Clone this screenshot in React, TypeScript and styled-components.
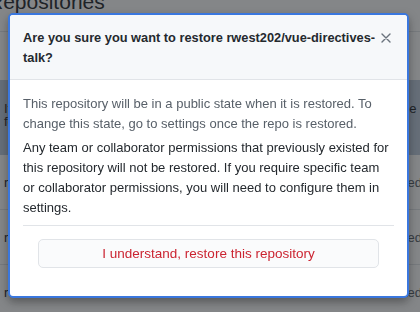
import React from 'react';
import styled, { createGlobalStyle } from 'styled-components';

const GlobalStyle = createGlobalStyle`
  html, body {
    margin: 0;
    padding: 0;
    width: 420px;
    height: 312px;
    overflow: hidden;
    background: #fff;
  }
  body {
    font-family: "Liberation Sans", Arial, Helvetica, sans-serif;
    color: #24292e;
    -webkit-font-smoothing: antialiased;
  }
`;

/* --- page behind the dialog --- */

const Page = styled.div`
  width: 560px;
  margin-left: -12px;
`;

const PageTitle = styled.h2`
  margin: -11px 0 0;
  padding: 0 0 16px;
  font-size: 21px;
  line-height: 26px;
  font-weight: 400;
  color: #24292e;
  border-bottom: 1px solid #e1e4e8;
`;

const Notice = styled.div`
  margin-top: 48px;
  height: 75px;
  box-sizing: border-box;
  padding: 22px 16px 0 16px;
  background: #bdcbdd;
  font-size: 13px;
  line-height: 13px;
  color: #24292e;
`;

const Row = styled.div`
  display: flex;
  justify-content: space-between;
  align-items: center;
  height: 54px;
  padding: 0 16px 0 16px;
  border-bottom: 1px solid #e1e4e8;
  font-size: 13px;
  color: #24292e;
`;

const RowMeta = styled.span`
  color: #586069;
  margin-right: 110px;
`;

/* --- dialog --- */

const Overlay = styled.div`
  position: fixed;
  inset: 0;
  background: rgba(27, 31, 35, 0.54);
  padding: 13px 0 0 8px;
`;

const Dialog = styled.div`
  width: 401px;
  box-sizing: border-box;
  background: #fff;
  border: 2px solid #3a77de;
  border-radius: 5px;
  overflow: hidden;
  box-shadow: 0 4px 10px rgba(0, 0, 0, 0.35);
`;

const Header = styled.div`
  display: flex;
  align-items: flex-start;
  padding: 13px 14px 11px 13px;
  background: #f6f8fa;
  border-bottom: 1px solid #e1e4e8;
`;

const Title = styled.h3`
  flex: 1;
  margin: 0;
  font-size: 12.8px;
  line-height: 20px;
  font-weight: 700;
  color: #24292e;
`;

const CloseButton = styled.button`
  width: 14px;
  height: 20px;
  padding: 0;
  border: 0;
  background: transparent;
  color: #6a737d;
  display: flex;
  align-items: center;
  justify-content: center;
  cursor: pointer;
`;

const Body = styled.div`
  padding: 14px 13px 28px 13px;
`;

const Text = styled.p<{ $muted?: boolean }>`
  margin: 0 0 4px;
  font-size: 13px;
  line-height: 20px;
  color: ${(p) => (p.$muted ? '#586069' : '#24292e')};
`;

const Divider = styled.hr`
  margin: 7px 0 13px;
  border: 0;
  border-top: 1px solid #e1e4e8;
  height: 0;
`;

const DangerButton = styled.button`
  display: block;
  width: calc(100% - 30px);
  height: 29px;
  margin: 0 15px;
  box-sizing: border-box;
  border: 1px solid #e1e4e8;
  border-radius: 5px;
  background: #fafbfc;
  color: #cb2431;
  font-family: inherit;
  font-size: 13.5px;
  cursor: pointer;
`;

const CloseIcon = () => (
  <svg width="10" height="10" viewBox="0 0 10 10" fill="none">
    <path d="M1 1l8 8M9 1l-8 8" stroke="currentColor" strokeWidth="1.4" strokeLinecap="round" />
  </svg>
);

const App: React.FC = () => {
  return (
    <>
      <GlobalStyle />
      <Page>
        <PageTitle>Repositories</PageTitle>
        <Notice>
          It may take a few minutes for a repository to be fully restored, and some
          <br />
          features may be unavailable until then.
        </Notice>
        <Row>
          <span>rwest202/vue-directives-talk</span>
          <RowMeta>Deleted</RowMeta>
        </Row>
        <Row>
          <span>rwest202/lunch-app</span>
          <RowMeta>Deleted</RowMeta>
        </Row>
        <Row>
          <span>rwest202/dotfiles</span>
          <RowMeta>Deleted</RowMeta>
        </Row>
      </Page>
      <Overlay>
        <Dialog role="dialog">
          <Header>
            <Title>Are you sure you want to restore rwest202/vue-directives-talk?</Title>
            <CloseButton aria-label="Close">
              <CloseIcon />
            </CloseButton>
          </Header>
          <Body>
            <Text $muted>
              This repository will be in a public state when it is restored. To change this
              state, go to settings once the repo is restored.
            </Text>
            <Text>
              Any team or collaborator permissions that previously existed for this repository
              will not be restored. If you require specific team or collaborator permissions,
              you will need to configure them in settings.
            </Text>
            <Divider />
            <DangerButton>I understand, restore this repository</DangerButton>
          </Body>
        </Dialog>
      </Overlay>
    </>
  );
};

export default App;
